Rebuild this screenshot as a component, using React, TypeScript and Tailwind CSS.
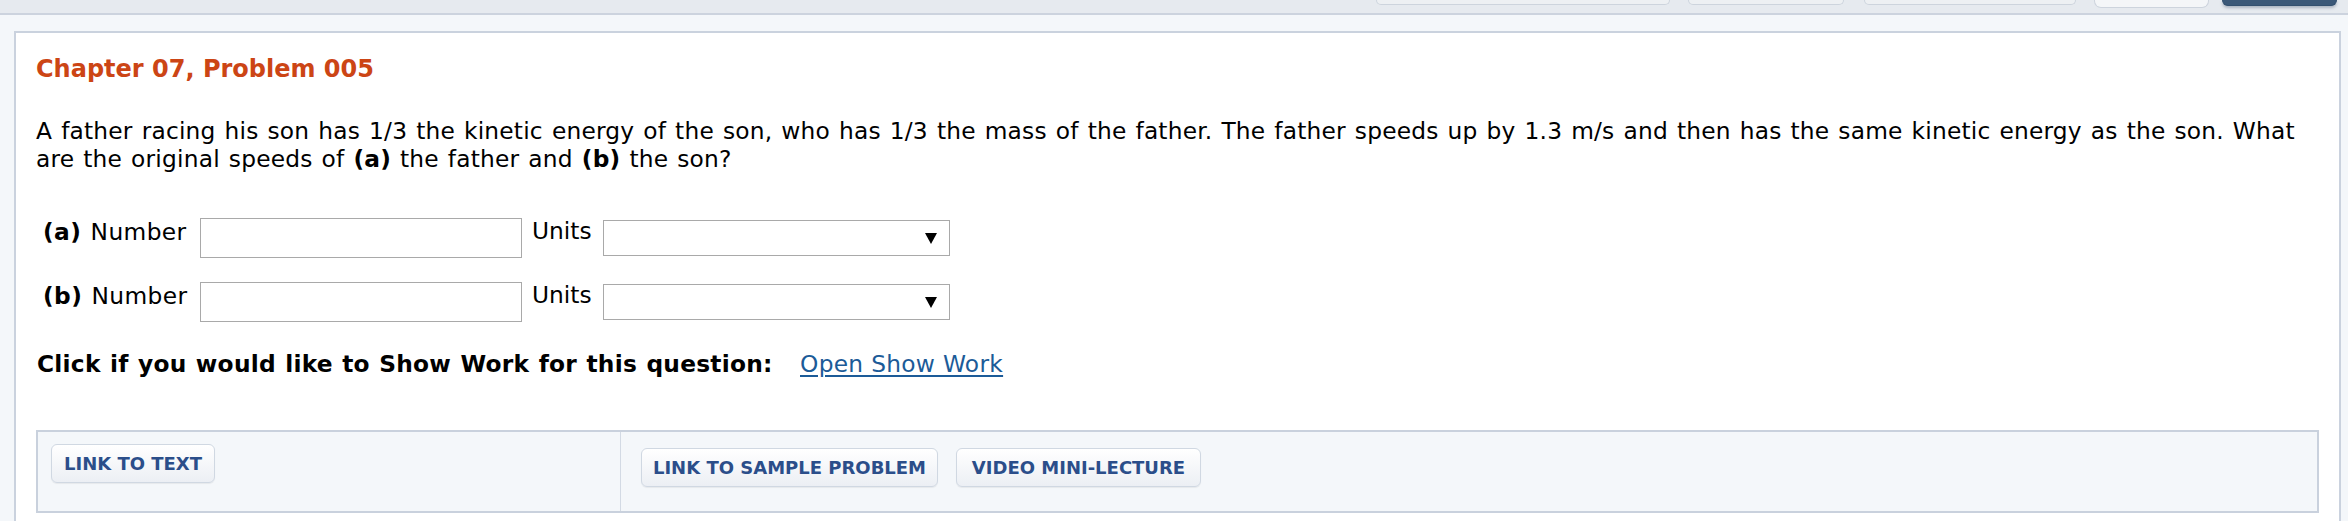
import React from 'react';

const font = { fontFamily: '"DejaVu Sans", Verdana, sans-serif' };

const TopTab: React.FC<{ w: string; h: string; dark?: boolean; light?: boolean }> = ({ w, h, dark, light }) => (
  <div
    className={`${w} ${h} rounded-b-[7px] border-x border-b ${
      dark
        ? 'bg-[#3b5878] border-[#33506f] shadow-[0_2px_3px_rgba(60,80,110,0.35)]'
        : light
        ? 'bg-[#f4f6f8] border-[#cdd4dd]'
        : 'bg-[#edf0f3] border-[#cdd4dd]'
    }`}
  />
);

const ToolButton: React.FC<{ label: string; w: string }> = ({ label, w }) => (
  <button
    className={`${w} h-[39px] rounded-[6px] border border-[#d0d8e2] bg-gradient-to-b from-white to-[#eceff4] shadow-[0_1px_1px_rgba(0,0,0,0.06)] text-[18px] font-bold text-[#2b4e8a] leading-none`}
  >
    {label}
  </button>
);

const AnswerRow: React.FC<{ part: string }> = ({ part }) => (
  <div className="flex items-start pl-[7px] h-[40px]">
    <span className="w-[157px] shrink-0 leading-[28px] tracking-[0.4px] [word-spacing:1.5px]">
      <b>({part})</b> Number
    </span>
    <input className="w-[322px] h-[40px] shrink-0 border border-[#a9a9a9] bg-white outline-none" />
    <span className="ml-[10px] w-[71px] shrink-0 leading-[28px] -mt-[1px]">Units</span>
    <div className="mt-[2px] w-[347px] h-[36px] shrink-0 border border-[#a9a9a9] bg-white flex items-center justify-end pr-[12px]">
      <svg width="12" height="11" viewBox="0 0 12 11">
        <path d="M0 0 H12 L6 11 Z" fill="#000" />
      </svg>
    </div>
  </div>
);

export default function App() {
  return (
    <div className="h-[521px] overflow-hidden bg-[#f4f7fa] text-black" style={font}>
      {/* top toolbar strip */}
      <div className="h-[15px] bg-[#e6eaef] border-b-2 border-[#ccd3de] flex justify-end items-start pr-[11px]">
        <TopTab w="w-[294px]" h="h-[5px]" />
        <div className="w-[18px]" />
        <TopTab w="w-[156px]" h="h-[5px]" />
        <div className="w-[20px]" />
        <TopTab w="w-[212px]" h="h-[5px]" />
        <div className="w-[18px]" />
        <TopTab w="w-[115px]" h="h-[8px]" light />
        <div className="w-[13px]" />
        <TopTab w="w-[115px]" h="h-[6px]" dark />
      </div>

      <div className="pt-[16px] pl-[14px] pr-[7px]">
        <div className="bg-white border-2 border-[#cad2de] px-[20px] pt-[21px] pb-[20px]">
          <h1 className="text-[24px] leading-[30px] font-bold text-[#cc4515]">Chapter 07, Problem 005</h1>

          <p className="mt-[33px] text-[23.3px] leading-[28px] tracking-[0.2px] [word-spacing:1.4px]">
            A father racing his son has 1/3 the kinetic energy of the son, who has 1/3 the mass of the father. The
            father speeds up by 1.3 m/s and then has the same kinetic energy as the son. What are the original speeds
            of <b>(a)</b> the father and <b>(b)</b> the son?
          </p>

          <div className="mt-[45px] text-[23.3px] flex flex-col gap-[24px]">
            <AnswerRow part="a" />
            <AnswerRow part="b" />
          </div>

          <div className="mt-[28px] flex items-start text-[23.3px] leading-[28px]">
            <span className="w-[764px] shrink-0 pl-[1px] font-bold tracking-[0.25px] [word-spacing:1px]">
              Click if you would like to Show Work for this question:
            </span>
            <a href="#" className="text-[#1c5b98] underline underline-offset-[3px] tracking-[0.3px]">
              Open Show Work
            </a>
          </div>

          <div className="mt-[52px] h-[83px] border-2 border-[#c9d1dd] bg-[#f4f7fa] flex">
            <div className="w-[583px] shrink-0 border-r border-[#d3dae4] pl-[13px] pt-[12px]">
              <ToolButton label="LINK TO TEXT" w="w-[164px]" />
            </div>
            <div className="flex-1 pl-[20px] pt-[16px] flex items-start gap-[18px]">
              <ToolButton label="LINK TO SAMPLE PROBLEM" w="w-[297px]" />
              <ToolButton label="VIDEO MINI-LECTURE" w="w-[245px]" />
            </div>
          </div>
        </div>
      </div>
    </div>
  );
}
